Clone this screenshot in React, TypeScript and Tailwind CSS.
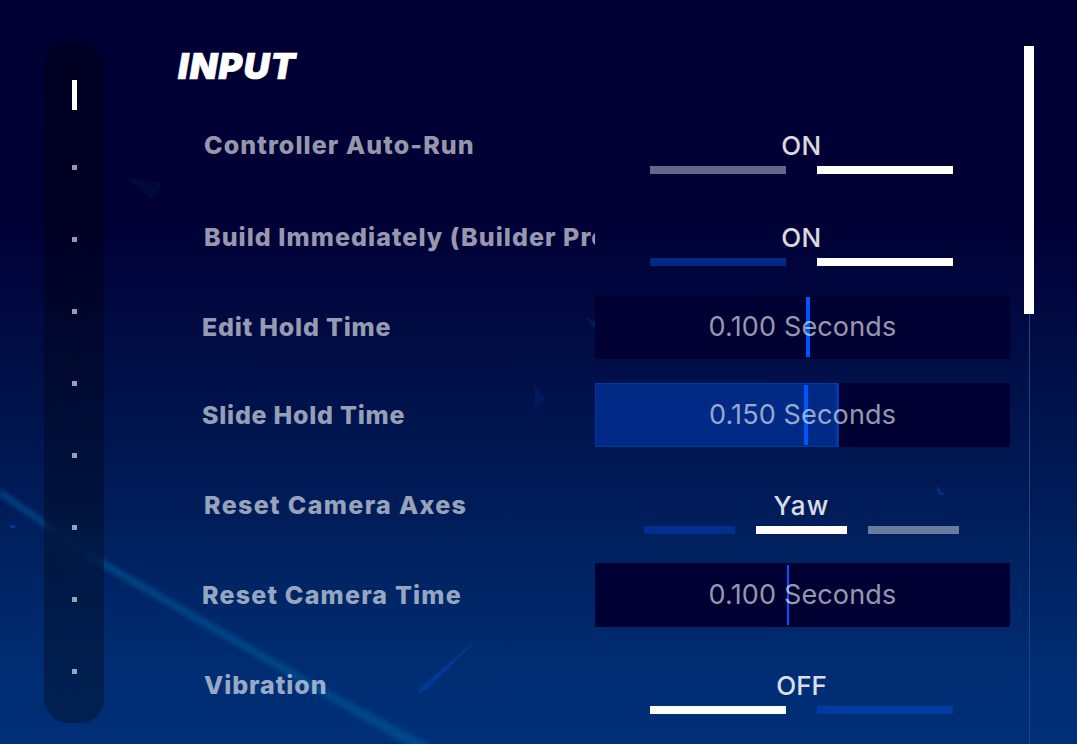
import React from "react";

const labelFont = "font-['Inter','Liberation_Sans',sans-serif]";

function Label({ text, inset, tracking }: { text: string; inset: "toggle" | "slider"; tracking: string }) {
  return (
    <div className={`w-[417px] shrink-0 overflow-hidden whitespace-nowrap text-[25px] font-extrabold leading-[30px] text-white/60 ${tracking} ${inset === "toggle" ? "pl-[26px]" : "pl-[24px]"}`}>
      {text}
    </div>
  );
}

function Toggle({ value, bars, small, tracking }: { value: string; bars: string[]; small?: boolean; tracking: string }) {
  return (
    <div className="flex h-16 w-[415px] flex-col items-center justify-end pb-[3px] pr-[2px]">
      <div className={`mb-[5px] text-[26px] font-medium leading-[30px] text-white/85 ${tracking}`}>{value}</div>
      <div className={`flex ${small ? "gap-[21px]" : "gap-[31px]"}`}>
        {bars.map((c, i) => (
          <div key={i} className={`h-2 ${small ? "w-[91px]" : "w-[136px]"} ${c}`} />
        ))}
      </div>
    </div>
  );
}

function Slider({ value, handle, handleW, fill }: { value: string; handle: string; handleW: string; fill?: boolean }) {
  return (
    <div className="relative flex h-16 w-[415px] items-center justify-center bg-[#000033]">
      {fill && <div className="absolute inset-y-0 left-0 w-[244px] border border-r-[3px] border-[#0038a8] bg-[#002a85]" />}
      <div className={`absolute inset-y-[2px] bg-[#0055ff] ${handle} ${handleW}`} />
      <div className="relative text-[27px] font-normal leading-[30px] tracking-[0.15px] text-white/60">{value}</div>
    </div>
  );
}

function Row({ className, children }: { className?: string; children: React.ReactNode }) {
  return <div className={`flex items-center ${className ?? ""}`}>{children}</div>;
}

export default function App() {
  const dots = [0, 1, 2, 3, 4, 5, 6, 7];
  return (
    <div className={`relative flex h-[744px] w-[1077px] overflow-hidden bg-[linear-gradient(180deg,#000033_0%,#000035_30%,#001a55_65%,#002d72_90%,#002f78_100%)] ${labelFont}`}>
      <svg className="absolute inset-0" width="1077" height="744" viewBox="0 0 1077 744" fill="none">
        <defs>
          <filter id="blur" x="-10%" y="-10%" width="120%" height="120%">
            <feGaussianBlur stdDeviation="2.5" />
          </filter>
        </defs>
        <path d="M0 489 L100 558 L333 693 L440 750 L415 750 L333 702 L100 566 L0 496 Z" fill="#00508f" opacity="0.8" filter="url(#blur)" />
        <path d="M127 178 L163 182 L153 200 Z" fill="#000a3a" />
        <path d="M535 386 L546 398 L535 412 Z" fill="#001a5c" />
        <path d="M585 317 L595 321 L595 329 Z" fill="#001a5c" />
        <path d="M935 485 L945 495 L939 495 Z" fill="#003080" />
        <path d="M480 637 L420 688 L418 694 L426 690 Z" fill="#003a96" />
        <path d="M8 525 L18 526 L12 529 Z" fill="#003a96" />
      </svg>

      <div className="relative ml-[44px] mt-[43px] flex h-[680px] w-[60px] shrink-0 flex-col items-center rounded-[24px] bg-black/30 pl-[1px] pt-[37px] backdrop-blur-lg">
        <div className="h-[30px] w-[5px] bg-white" />
        {dots.map((d) => (
          <div key={d} className={`h-[5px] w-[5px] bg-white/60 ${d === 0 ? "mt-[55px]" : "mt-[67px]"}`} />
        ))}
      </div>

      <div className="relative ml-[74px] flex w-[832px] shrink-0 flex-col pt-[47px]">
        <h1 className="h-[39px] text-[36px] font-black italic leading-[39px] tracking-[1.2px] text-white [-webkit-text-stroke:0.7px_white]">INPUT</h1>
        <Row className="mt-[27px]">
          <Label text="Controller Auto-Run" inset="toggle" tracking="tracking-[1.1px]" />
          <Toggle value="ON" tracking="tracking-[0.5px]" bars={["bg-[#666688]", "bg-white"]} />
        </Row>
        <Row className="mt-[28px]">
          <Label text="Build Immediately (Builder Pro)" inset="toggle" tracking="tracking-[1.05px]" />
          <Toggle value="ON" tracking="tracking-[0.5px]" bars={["bg-[#002a85]", "bg-white"]} />
        </Row>
        <Row className="mt-[26px]">
          <Label text="Edit Hold Time" inset="slider" tracking="tracking-[0.8px]" />
          <Slider value="0.100 Seconds" handle="left-[211px]" handleW="w-1" />
        </Row>
        <Row className="mt-[24px]">
          <Label text="Slide Hold Time" inset="slider" tracking="tracking-[0.75px]" />
          <Slider value="0.150 Seconds" handle="left-[209px]" handleW="w-1" fill />
        </Row>
        <Row className="mt-[26px]">
          <Label text="Reset Camera Axes" inset="toggle" tracking="tracking-[1.35px]" />
          <Toggle value="Yaw" tracking="tracking-[1.2px]" small bars={["bg-[#002f8f]", "bg-white", "bg-[#6b7b9e]"]} />
        </Row>
        <Row className="mt-[26px]">
          <Label text="Reset Camera Time" inset="slider" tracking="tracking-[1.2px]" />
          <Slider value="0.100 Seconds" handle="left-[192px]" handleW="w-[2px]" />
        </Row>
        <Row className="mt-[26px]">
          <Label text="Vibration" inset="toggle" tracking="tracking-[0.95px]" />
          <Toggle value="OFF" tracking="tracking-[0px]" bars={["bg-white", "bg-[#003aa5]"]} />
        </Row>
      </div>

      <div className="relative ml-[14px] mt-[46px] flex w-[10px] shrink-0 flex-col items-center">
        <div className="h-[268px] w-[10px] bg-white" />
        <div className="w-px flex-1 bg-[#1d4585]" />
      </div>
    </div>
  );
}
